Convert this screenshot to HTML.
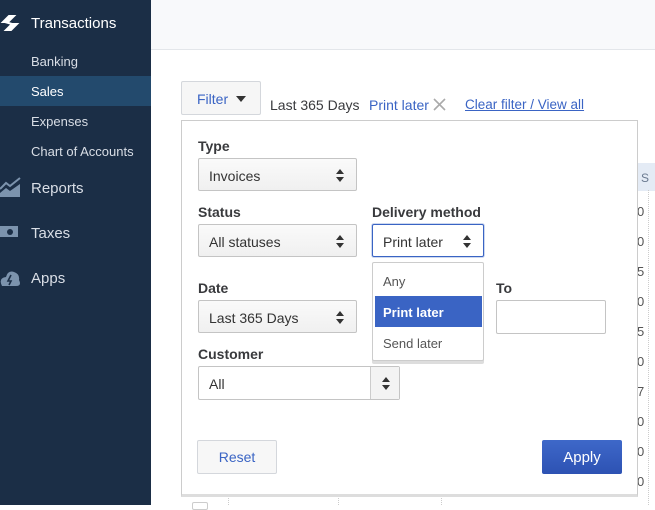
<!DOCTYPE html>
<html><head><style>
*{box-sizing:border-box;margin:0;padding:0}
body{width:655px;height:505px;overflow:hidden;background:#fff;font-family:"Liberation Sans",Arial,sans-serif;position:relative}
.sb{position:absolute;left:0;top:0;width:151px;height:505px;background:#1b2e46}
.sb div{position:absolute;color:#d9dee6;font-size:13px}
.top{position:absolute;left:151px;top:0;right:0;height:50px;background:#f8f9fb;border-bottom:1px solid #e3e6ea}
.abs{position:absolute;white-space:nowrap}
.sel{position:absolute;height:33px;border:1px solid #c4c4c4;border-radius:2px;background:linear-gradient(#fafafa,#f0f0f0);font-size:14px;color:#333;padding:9px 10px;white-space:nowrap}
.arr{position:absolute;right:12px;top:10px;width:8px;height:13px}
.lbl{position:absolute;font-size:14px;font-weight:bold;color:#393a3d}
.num{position:absolute;left:637px;font-size:13px;color:#555}
</style></head><body>
<div class="sb">
 <svg class="abs" style="left:0;top:13px" width="20" height="20" viewBox="0 0 20 20"><path d="M3 9 L9 3 L14 3 L8 9 Z M6 17 L12 11 L17 11 L11 17 Z M5 9 L12 11" fill="#fff" stroke="#fff" stroke-width="2"/></svg>
 <div style="left:31px;top:15px;font-size:15px;color:#fff">Transactions</div>
 <div style="left:31px;top:54px">Banking</div>
 <div style="left:0;top:76px;width:151px;height:30px;background:#234a6d"></div>
 <div style="left:31px;top:84px;color:#fff">Sales</div>
 <div style="left:31px;top:114px">Expenses</div>
 <div style="left:31px;top:144px">Chart of Accounts</div>
 <svg class="abs" style="left:0;top:177px" width="22" height="20"><path d="M0 12 L6 6 L10 9 L20 1" stroke="#7c93ad" stroke-width="2" fill="none"/><path d="M0 20 L0 16 L6 11 L10 14 L20 7 L20 20Z" fill="#7c93ad"/></svg>
 <div style="left:31px;top:180px;font-size:15px">Reports</div>
 <svg class="abs" style="left:0;top:226px" width="20" height="12"><rect x="0" y="0" width="18" height="11" fill="#7c93ad"/><circle cx="10" cy="6" r="3" fill="#1b2e46"/></svg>
 <div style="left:31px;top:225px;font-size:15px">Taxes</div>
 <svg class="abs" style="left:0;top:268px" width="22" height="20"><path d="M2 18 Q-2 10 6 9 Q8 2 14 4 Q20 6 19 12 Q22 18 16 18Z" fill="#7c93ad"/><path d="M11 7 L8 13 L11 13 L9 17" stroke="#1b2e46" stroke-width="1.6" fill="none"/></svg>
 <div style="left:31px;top:270px;font-size:15px">Apps</div>
</div>
<div class="top"></div>
<div class="abs" style="left:637px;top:163px;width:18px;height:28px;background:#e4ebf5"></div>
<div class="abs" style="left:641px;top:171px;font-size:12px;color:#6a7a90">S</div>
<div class="abs" style="left:648px;top:190px;width:0;height:315px;border-left:1px dotted #ccc"></div>
<div class="num" style="top:204px">0</div><div class="num" style="top:234px">0</div><div class="num" style="top:264px">5</div><div class="num" style="top:294px">0</div><div class="num" style="top:324px">5</div><div class="num" style="top:354px">0</div><div class="num" style="top:384px">7</div><div class="num" style="top:414px">0</div><div class="num" style="top:444px">0</div><div class="num" style="top:474px">0</div>
<div class="abs" style="left:228px;top:496px;height:9px;border-left:1px dotted #ccc"></div>
<div class="abs" style="left:338px;top:496px;height:9px;border-left:1px dotted #ccc"></div>
<div class="abs" style="left:441px;top:496px;height:9px;border-left:1px dotted #ccc"></div>
<div class="abs" style="left:192px;top:502px;width:16px;height:8px;border:1px solid #ccc;border-radius:2px"></div>
<div class="abs" style="left:181px;top:81px;width:80px;height:34px;border:1px solid #d4d7dc;border-radius:2px;background:#f6f6f6;font-size:14px;color:#3a64c4;padding:9px 15px">Filter</div>
<svg class="abs" style="left:236px;top:96px" width="10" height="6"><path d="M0 0L10 0L5 6Z" fill="#333"/></svg>
<div class="abs" style="left:270px;top:97px;font-size:14px;color:#393a3d">Last 365 Days</div>
<div class="abs" style="left:369px;top:97px;font-size:14px;color:#3a64c4">Print later</div>
<svg class="abs" style="left:433px;top:98px" width="13" height="13"><path d="M1 1L12 12M12 1L1 12" stroke="#aaa" stroke-width="1.6"/></svg>
<div class="abs" style="left:465px;top:97px;font-size:13.5px;color:#3a64c4;text-decoration:underline">Clear filter / View all</div>
<div class="abs" style="left:181px;top:120px;width:457px;height:377px;border:1px solid #ccc;border-bottom:3px solid #ddd;background:#fff"></div>
<div class="lbl" style="left:198px;top:138px">Type</div>
<div class="sel" style="left:198px;top:158px;width:159px">Invoices<svg class="arr" viewBox="0 0 8 13"><path d="M0 5L4 0L8 5ZM0 8L4 13L8 8Z" fill="#333"/></svg></div>
<div class="lbl" style="left:198px;top:204px">Status</div>
<div class="sel" style="left:198px;top:224px;width:159px">All statuses<svg class="arr" viewBox="0 0 8 13"><path d="M0 5L4 0L8 5ZM0 8L4 13L8 8Z" fill="#333"/></svg></div>
<div class="lbl" style="left:372px;top:204px">Delivery method</div>
<div class="sel" style="left:372px;top:224px;width:112px;border:1px solid #3a64c4;box-shadow:0 0 0 1px #cdd8ef;background:#fff">Print later<svg class="arr" viewBox="0 0 8 13"><path d="M0 5L4 0L8 5ZM0 8L4 13L8 8Z" fill="#333"/></svg></div>
<div class="lbl" style="left:198px;top:280px">Date</div>
<div class="sel" style="left:198px;top:300px;width:159px">Last 365 Days<svg class="arr" viewBox="0 0 8 13"><path d="M0 5L4 0L8 5ZM0 8L4 13L8 8Z" fill="#333"/></svg></div>
<div class="lbl" style="left:496px;top:280px">To</div>
<div class="abs" style="left:496px;top:300px;width:110px;height:34px;border:1px solid #c4c4c4;border-radius:2px"></div>
<div class="lbl" style="left:198px;top:346px">Customer</div>
<div class="abs" style="left:198px;top:366px;width:202px;height:34px;border:1px solid #c4c4c4;border-radius:2px;font-size:14px;color:#333;padding:9px 10px">All</div>
<div class="abs" style="left:370px;top:367px;width:29px;height:32px;border-left:1px solid #ccc;background:#f3f3f3"><svg style="position:absolute;left:11px;top:10px" width="8" height="13"><path d="M0 5L4 0L8 5ZM0 8L4 13L8 8Z" fill="#333"/></svg></div>
<div class="abs" style="left:372px;top:262px;width:112px;height:99px;border:1px solid #ccc;border-radius:2px;background:#fff;box-shadow:0 3px 0 #ddd"></div>
<div class="abs" style="left:383px;top:274px;font-size:13px;color:#555">Any</div>
<div class="abs" style="left:375px;top:296px;width:107px;height:31px;background:#3a64c4"></div>
<div class="abs" style="left:383px;top:305px;font-size:13px;color:#fff;font-weight:bold">Print later</div>
<div class="abs" style="left:383px;top:336px;font-size:13px;color:#555">Send later</div>
<div class="abs" style="left:197px;top:440px;width:80px;height:34px;border:1px solid #d4d7dc;border-radius:2px;background:#f7f7f7;font-size:14px;color:#3a64c4;text-align:center;line-height:32px">Reset</div>
<div class="abs" style="left:542px;top:440px;width:80px;height:34px;border-radius:2px;background:linear-gradient(#3e68c9,#2d52b3);font-size:15px;color:#fff;text-align:center;line-height:36px">Apply</div>
</body></html>
